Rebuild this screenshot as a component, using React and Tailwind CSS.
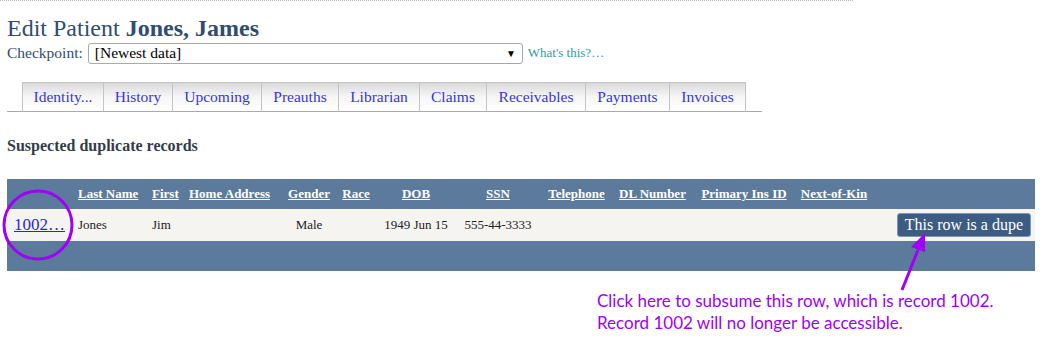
import React from 'react';

const serif = '"Liberation Serif", "Times New Roman", serif';

const tabs = [
    ['Identity...', 82],
    ['History', 69],
    ['Upcoming', 89],
    ['Preauths', 77],
    ['Librarian', 81],
    ['Claims', 67],
    ['Receivables', 99],
    ['Payments', 84],
    ['Invoices', 76],
];

// header label, column width, alignment
const cols = [
    ['Last Name', 'w-[74px] pl-[3px] text-left'],
    ['First', 'w-[37px] pl-[3px] text-left'],
    ['Home Address', 'w-[96px] pl-[3px] text-left'],
    ['Gender', 'w-[54px] text-center'],
    ['Race', 'w-[40px] text-center'],
    ['DOB', 'w-[80px] text-center'],
    ['SSN', 'w-[84px] text-center'],
    ['Telephone', 'w-[73px] text-center'],
    ['DL Number', 'w-[79px] text-center'],
    ['Primary Ins ID', 'w-[104px] text-center'],
    ['Next-of-Kin', 'w-[76px] text-center'],
];

const row = ['Jones', 'Jim', '', 'Male', '', '1949 Jun 15', '555-44-3333', '', '', '', ''];

export default function App() {
    return (
        <div
            className="relative w-[1040px] h-[344px] bg-white overflow-hidden"
            style={{ fontFamily: serif }}
        >
            <div className="w-[853px] border-t border-dotted border-[#b8b8b8]" />

            {/* Heading */}
            <div className="px-[7px] pt-[13px]">
                <h1 className="text-[24px] leading-[28px] text-[#2f4d70]">
                    Edit Patient <span className="font-bold">Jones, James</span>
                </h1>
                <div className="flex items-center h-[22px] text-[15.5px] text-[#2f4d70]">
                    <span>Checkpoint:</span>
                    <div
                        className="ml-[5px] flex items-center justify-between w-[435px] h-[21px] border border-[#a9a9a9] rounded-[3px] pl-[6px] pr-[6px] text-black text-[15.5px]"
                        style={{ fontFamily: serif }}
                    >
                        <span>[Newest data]</span>
                        <span className="text-[10px]">▼</span>
                    </div>
                    <a className="ml-[5px] text-[13px] text-[#2e9e9e]">What's this?…</a>
                </div>
            </div>

            {/* Tabs */}
            <div className="ml-[7px] mt-[18px] w-[755px] flex border-b border-[#aaaaaa] pl-[15px]">
                {tabs.map(([label, w], i) => (
                    <div
                        key={label}
                        style={{ width: w }}
                        className={`h-[30px] -mb-px flex items-center justify-center border-t border-r border-b border-[#c4c4c4] border-b-[#aaaaaa] bg-gradient-to-b from-[#dadada] via-[#f6f6f6] to-white text-[15.5px] text-[#3434f0] ${i === 0 ? 'border-l' : ''}`}
                    >
                        {label}
                    </div>
                ))}
            </div>

            <h2 className="px-[7px] mt-[24px] text-[16px] leading-[20px] font-bold text-[#333d4a]">
                Suspected duplicate records
            </h2>

            {/* Table */}
            <div className="ml-[7px] mt-[23px] w-[1028px] bg-[#5c7a9c]">
                <div className="flex h-[30px] items-center text-[13px] font-bold text-white">
                    <div className="w-[68px]" />
                    {cols.map(([label, cls]) => (
                        <div key={label} className={cls}>
                            <span className="underline">{label}</span>
                        </div>
                    ))}
                </div>
                <div className="flex h-[32px] items-center bg-[#f5f4f0] text-[13px] text-[#222]">
                    <div className="w-[68px] pl-[7px]">
                        <a className="text-[17px] text-[#2424e8] underline">1002…</a>
                    </div>
                    {cols.map(([label, cls], i) => (
                        <div key={label} className={cls}>
                            {row[i]}
                        </div>
                    ))}
                    <div className="flex-1 flex justify-end pr-[4px]">
                        <button
                            className="h-[24px] px-[7px] rounded-[3px] bg-[#3d5c82] border border-[#7d97b5] text-white text-[16px] leading-none"
                            style={{ fontFamily: serif }}
                        >
                            This row is a dupe
                        </button>
                    </div>
                </div>
                <div className="h-[30px]" />
            </div>

            {/* Annotation */}
            <div
                className="ml-[597px] mt-[19px] text-[17px] leading-[22px] text-[#a100f0]"
                style={{ fontFamily: 'Lato, "Open Sans", sans-serif' }}
            >
                <p>Click here to subsume this row, which is record 1002.</p>
                <p>Record 1002 will no longer be accessible.</p>
            </div>

            {/* Overlay markings */}
            <svg className="absolute left-0 top-0 pointer-events-none" width="1040" height="344">
                <ellipse cx="38" cy="225" rx="34" ry="34" fill="none" stroke="#a000f5" strokeWidth="3" />
                <line x1="902" y1="290" x2="918" y2="250" stroke="#a000f5" strokeWidth="3" />
                <polygon points="925,233 911,247 925,252" fill="#a000f5" />
            </svg>
        </div>
    );
}
